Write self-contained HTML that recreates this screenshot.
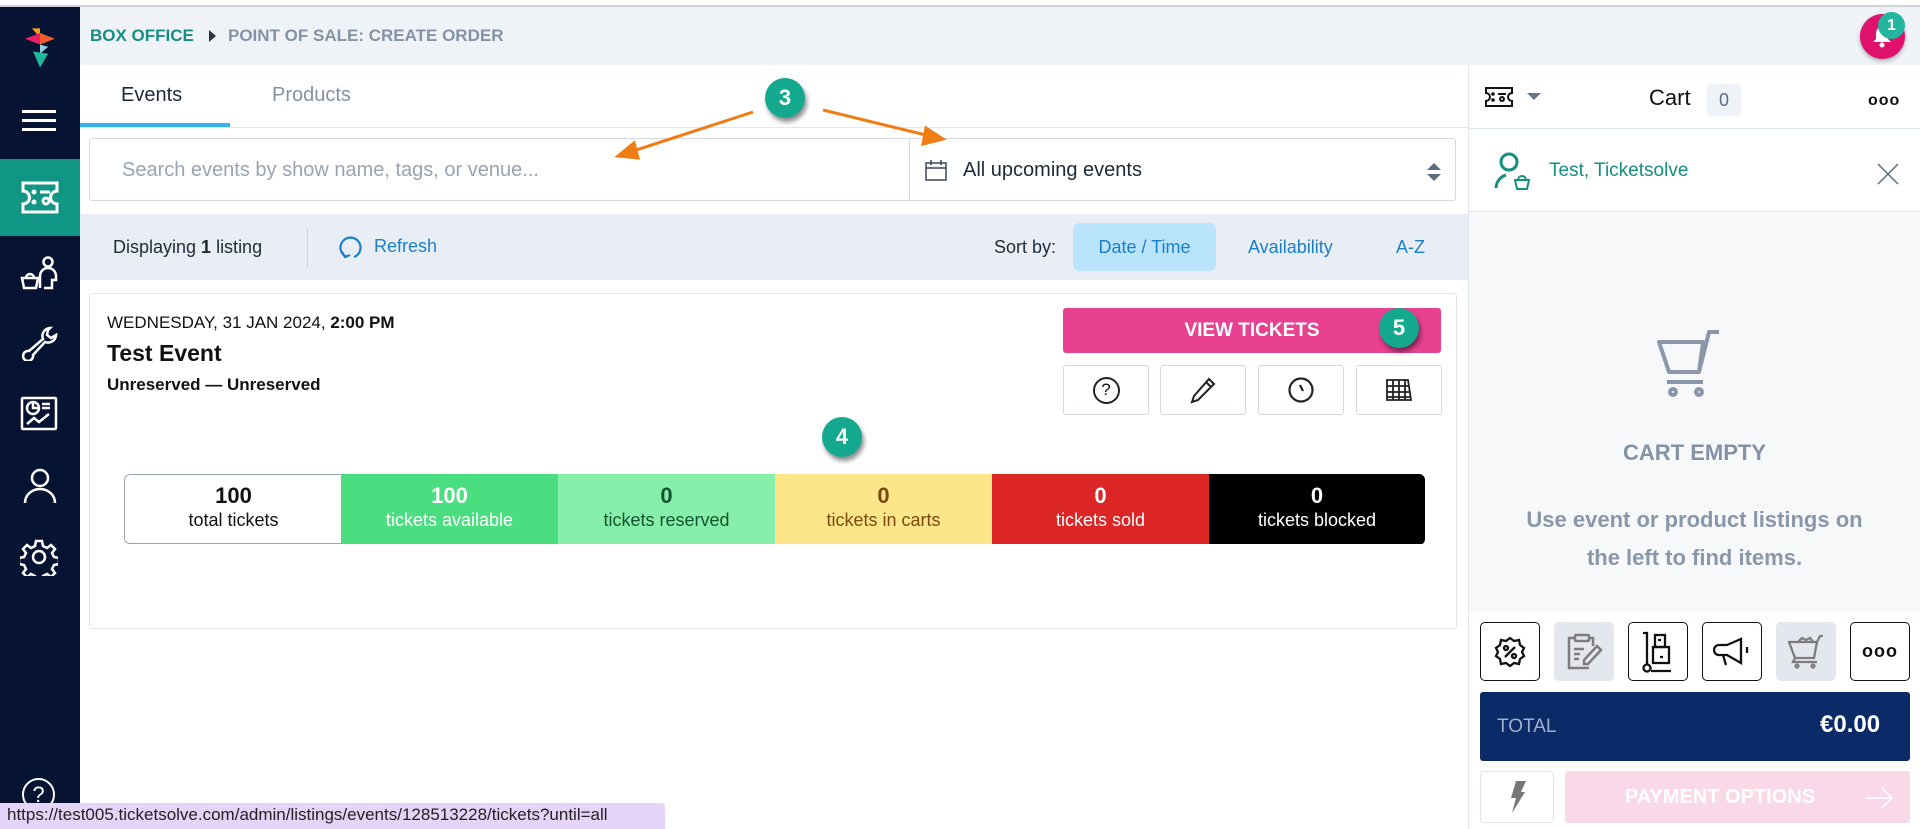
<!DOCTYPE html>
<html><head><meta charset="utf-8"><style>
*{box-sizing:border-box;margin:0;padding:0}
body{width:1920px;height:829px;overflow:hidden;background:#fff;font-family:"Liberation Sans",sans-serif;position:relative;color:#111}
.a{position:absolute}
.c{display:flex;align-items:center;justify-content:center}
svg{display:block}
.badge{position:absolute;width:40px;height:40px;border-radius:50%;background:#14a98f;color:#fff;font-weight:bold;font-size:22px;display:flex;align-items:center;justify-content:center;box-shadow:2px 4px 5px rgba(0,0,0,.45)}
.ib{position:absolute;border:1px solid #d4d8de;border-radius:3px;background:#fff;display:flex;align-items:center;justify-content:center}
.seg{position:absolute;top:0;height:70px;width:217px;text-align:center;padding-top:10px}
.seg b{display:block;font-size:22px;line-height:24px}
.seg span{font-size:18px;line-height:24px}
.rb{position:absolute;top:622px;width:60px;height:59px;border:1.5px solid #111;border-radius:5px;display:flex;align-items:center;justify-content:center;background:#fff}
</style></head><body>
<div class="a" style="left:0;top:0;width:1920px;height:5px;background:#fff"></div>
<div class="a" style="left:0;top:5px;width:1920px;height:2px;background:#cfd2d6"></div>
<!-- sidebar -->
<div class="a" style="left:0;top:7px;width:80px;height:822px;background:#061333"></div>
<svg class="a" style="left:25px;top:28px" width="30" height="40" viewBox="0 0 26 34"><polygon points="6,0 13,0 13,8" fill="#f7a21b"/><polygon points="0,9 13,4 13,14" fill="#e91e63"/><polygon points="13,4 26,9 13,14" fill="#f25c2b"/><polygon points="13,14 20,16 13,22" fill="#8fd0e0"/><polygon points="7,20 20,22 13,34" fill="#1fb89a"/></svg>
<div class="a" style="left:22px;top:110px;width:34px;height:3px;background:#fff"></div>
<div class="a" style="left:22px;top:119px;width:34px;height:3px;background:#fff"></div>
<div class="a" style="left:22px;top:128px;width:34px;height:3px;background:#fff"></div>
<div class="a" style="left:0;top:159px;width:80px;height:77px;background:#119685"></div>
<svg class="a" style="left:20px;top:180px" width="40" height="35" viewBox="0 0 40 35" fill="none" stroke="#fff" stroke-width="3"><path d="M3 3h34v8a6 6 0 0 0 0 13v8H3v-8a6 6 0 0 0 0-13z"/><circle cx="14" cy="12" r="1" fill="#fff"/><circle cx="14" cy="22" r="1" fill="#fff"/><path d="M20 12h10"/><circle cx="26" cy="21" r="3"/></svg>
<svg class="a" style="left:20px;top:256px" width="40" height="36" viewBox="0 0 40 36" fill="none" stroke="#fff" stroke-width="2.5"><circle cx="28" cy="6" r="4.5"/><path d="M20 32V20a8 8 0 0 1 16 0v4h-4v8h-8"/><path d="M2 22h16l-2 10H4z"/><path d="M6 22a4 4 0 0 1 8 0"/></svg>
<svg class="a" style="left:20px;top:325px" width="40" height="36" viewBox="0 0 40 36" fill="none" stroke="#fff" stroke-width="2.5"><path d="M30 3a8 8 0 0 0-7 11L9 26a5 5 0 1 0 4 4l12-13a8 8 0 0 0 11-7l-5 3-4-3 1-5z"/></svg>
<svg class="a" style="left:20px;top:396px" width="38" height="36" viewBox="0 0 38 36" fill="none" stroke="#fff" stroke-width="2.5"><rect x="2" y="2" width="34" height="31" rx="1"/><circle cx="13" cy="12" r="6"/><path d="M13 6v6h6M22 8h8M22 12h8M7 28l7-6 5 4 10-8"/></svg>
<svg class="a" style="left:22px;top:468px" width="36" height="36" viewBox="0 0 36 36" fill="none" stroke="#fff" stroke-width="2.5"><circle cx="18" cy="10" r="8"/><path d="M3 35a15 14 0 0 1 30 0"/></svg>
<svg class="a" style="left:20px;top:538px" width="38" height="38" viewBox="0 0 38 38" fill="none" stroke="#fff" stroke-width="2.5"><circle cx="19" cy="19" r="6"/><path d="M16 3h6l1 5 4 2 4-3 4 4-3 4 2 4 5 1v6l-5 1-2 4 3 4-4 4-4-3-4 2-1 5h-6l-1-5-4-2-4 3-4-4 3-4-2-4-5-1v-6l5-1 2-4-3-4 4-4 4 3 4-2z"/></svg>
<div class="a" style="left:22px;top:778px;width:33px;height:33px;border:2.5px solid #fff;border-radius:50%;color:#fff;font-size:22px;text-align:center;line-height:29px">?</div>
<!-- header -->
<div class="a" style="left:80px;top:7px;width:1840px;height:58px;background:#eff3f8"></div>
<div class="a" style="left:90px;top:26px;font-size:17px;font-weight:bold;color:#148f80">BOX OFFICE</div>
<div class="a" style="left:209px;top:30px;width:0;height:0;border-left:7px solid #2b3340;border-top:6px solid transparent;border-bottom:6px solid transparent"></div>
<div class="a" style="left:228px;top:26px;font-size:17px;font-weight:bold;color:#8592a5">POINT OF SALE: CREATE ORDER</div>
<div class="a" style="left:1860px;top:14px;width:45px;height:45px;border-radius:50%;background:#e0116a;box-shadow:0 2px 4px rgba(0,0,0,.3)"></div>
<svg class="a" style="left:1870px;top:24px" width="24" height="24" viewBox="0 0 24 24"><path d="M12 3a6 6 0 0 0-6 6v6l-3 3h18l-3-3V9a6 6 0 0 0-6-6z" fill="#fff"/><circle cx="12" cy="21" r="2.5" fill="#fff"/></svg>
<div class="a c" style="left:1878px;top:12px;width:27px;height:27px;border-radius:50%;background:#23b59d;color:#fff;font-weight:bold;font-size:16px">1</div>
<!-- tabs -->
<div class="a" style="left:80px;top:127px;width:1389px;height:1px;background:#e1e7ef"></div>
<div class="a" style="left:121px;top:84px;font-size:20px;color:#1e2a3a">Events</div>
<div class="a" style="left:272px;top:84px;font-size:20px;color:#8592a5">Products</div>
<div class="a" style="left:80px;top:123px;width:150px;height:4px;background:#34b4ea"></div>
<!-- search -->
<div class="a" style="left:89px;top:138px;width:1367px;height:63px;border:1px solid #d6dae0;border-radius:3px"></div>
<div class="a" style="left:909px;top:139px;width:1px;height:61px;background:#d6dae0"></div>
<div class="a" style="left:122px;top:159px;font-size:20px;color:#9aa3b2">Search events by show name, tags, or venue...</div>
<svg class="a" style="left:925px;top:160px" width="22" height="21" viewBox="0 0 22 21" fill="none" stroke="#3a4556" stroke-width="1.5"><rect x="1" y="3" width="20" height="17"/><path d="M1 8h20M6 0v5M16 0v5"/></svg>
<div class="a" style="left:963px;top:159px;font-size:20px;color:#1e2a3a">All upcoming events</div>
<div class="a" style="left:1427px;top:163px;border-bottom:7px solid #5d6b80;border-left:7px solid transparent;border-right:7px solid transparent"></div>
<div class="a" style="left:1427px;top:174px;border-top:7px solid #5d6b80;border-left:7px solid transparent;border-right:7px solid transparent"></div>
<!-- toolbar -->
<div class="a" style="left:80px;top:214px;width:1389px;height:66px;background:#e9eef6"></div>
<div class="a" style="left:113px;top:237px;font-size:18px;color:#1e2a3a">Displaying <b>1</b> listing</div>
<div class="a" style="left:307px;top:228px;width:1px;height:40px;background:#cdd3dc"></div>
<svg class="a" style="left:339px;top:235px" width="24" height="25" viewBox="0 0 24 25" fill="none" stroke="#1a7fc8" stroke-width="2.2"><path d="M8 22a10 10 0 1 1 7 0"/><path d="M3 17l3 5 5-2"/></svg>
<div class="a" style="left:374px;top:236px;font-size:18px;color:#1a7fc8">Refresh</div>
<div class="a" style="left:994px;top:237px;font-size:18px;color:#1e2a3a">Sort by:</div>
<div class="a c" style="left:1073px;top:223px;width:143px;height:48px;border-radius:6px;background:#b9e4fb;font-size:18px;color:#1a7fc8">Date / Time</div>
<div class="a" style="left:1248px;top:237px;font-size:18px;color:#1a7fc8">Availability</div>
<div class="a" style="left:1396px;top:237px;font-size:18px;color:#1a7fc8">A-Z</div>
<!-- card -->
<div class="a" style="left:89px;top:293px;width:1368px;height:336px;border:1px solid #e1e5ea;border-radius:3px"></div>
<div class="a" style="left:107px;top:313px;font-size:17px;color:#111">WEDNESDAY, 31 JAN 2024, <b>2:00 PM</b></div>
<div class="a" style="left:107px;top:340px;font-size:23px;font-weight:bold;color:#111">Test Event</div>
<div class="a" style="left:107px;top:375px;font-size:17px;font-weight:bold;color:#111">Unreserved — Unreserved</div>
<div class="a c" style="left:1063px;top:308px;width:378px;height:45px;background:#e8418f;border-radius:3px;color:#fff;font-weight:bold;font-size:19px">VIEW TICKETS</div>
<div class="ib" style="left:1063px;top:365px;width:86px;height:50px"><div class="c" style="width:27px;height:27px;border:2px solid #222;border-radius:50%;font-size:17px">?</div></div>
<div class="ib" style="left:1160px;top:365px;width:86px;height:50px"><svg width="28" height="28" viewBox="0 0 28 28" fill="none" stroke="#222" stroke-width="2"><path d="M20 3l5 5L9 24l-6 2 2-6z M17 6l5 5"/></svg></div>
<div class="ib" style="left:1258px;top:365px;width:86px;height:50px"><svg width="28" height="28" viewBox="0 0 28 28" fill="none" stroke="#222" stroke-width="2.2"><circle cx="14" cy="14" r="11.5"/><path d="M13 9l3 6"/></svg></div>
<div class="ib" style="left:1356px;top:365px;width:86px;height:50px"><svg width="28" height="24" viewBox="0 0 28 24" fill="none" stroke="#222" stroke-width="1.8"><path d="M2 2h21l3 20H2z M2 8h22 M2 14h23 M2 19h24 M8 2v20 M14 2v20 M20 2v20"/></svg></div>
<!-- stats -->
<div class="a" style="left:124px;top:474px;width:1301px;height:71px;border-radius:6px;overflow:hidden">
<div class="seg" style="left:0;width:218px;border:1.5px solid #9aa4b4;border-right:none;border-radius:6px 0 0 6px;background:#fff;color:#111;padding-top:9px"><b>100</b><span>total tickets</span></div>
<div class="seg" style="left:217px;background:#4ade80;color:#fff"><b>100</b><span>tickets available</span></div>
<div class="seg" style="left:434px;background:#86efac;color:#14532d"><b>0</b><span>tickets reserved</span></div>
<div class="seg" style="left:651px;background:#fde68a;color:#7c4a10"><b>0</b><span>tickets in carts</span></div>
<div class="seg" style="left:868px;background:#dc2626;color:#fff"><b>0</b><span>tickets sold</span></div>
<div class="seg" style="left:1085px;width:216px;background:#000;color:#fff"><b>0</b><span>tickets blocked</span></div>
</div>
<!-- annotations -->
<svg class="a" style="left:600px;top:90px" width="360" height="80" viewBox="0 0 360 80"><g stroke="#f07d14" stroke-width="3" fill="#f07d14"><line x1="153" y1="22" x2="30" y2="62"/><polygon points="18,66 34,53 38,68"/><line x1="223" y1="20" x2="330" y2="46"/><polygon points="343,49 326,38 323,54"/></g></svg>
<div class="badge" style="left:765px;top:78px">3</div>
<div class="badge" style="left:822px;top:417px">4</div>
<div class="badge" style="left:1379px;top:308px">5</div>
<!-- right panel -->
<div class="a" style="left:1468px;top:65px;width:1px;height:764px;background:#e1e6ee"></div>
<svg class="a" style="left:1485px;top:87px" width="28" height="20" viewBox="0 0 28 20" fill="none" stroke="#111" stroke-width="2"><path d="M1 1h26v5a4 4 0 0 0 0 8v5H1v-5a4 4 0 0 0 0-8z"/><circle cx="8" cy="7" r=".8" fill="#111"/><circle cx="8" cy="13" r=".8" fill="#111"/><circle cx="17" cy="12" r="2"/><path d="M13 7h8"/></svg>
<div class="a" style="left:1527px;top:93px;border-top:7px solid #6b7689;border-left:7px solid transparent;border-right:7px solid transparent"></div>
<div class="a" style="left:1649px;top:85px;font-size:22px;color:#111">Cart</div>
<div class="a c" style="left:1707px;top:84px;width:34px;height:32px;background:#eef2f7;border-radius:3px;font-size:18px;color:#5d6b80">0</div>
<div class="a" style="left:1868px;top:92px;font-size:16px;font-weight:bold;letter-spacing:1px;color:#111">ooo</div>
<div class="a" style="left:1469px;top:128px;width:451px;height:1px;background:#e1e6ee"></div>
<svg class="a" style="left:1494px;top:151px" width="38" height="40" viewBox="0 0 38 40" fill="none" stroke="#148f80" stroke-width="3"><circle cx="15" cy="11" r="8"/><path d="M2 37a14 14 0 0 1 10-13"/><path d="M21 29h14l-2 9H23z M24 29a4 4 0 0 1 8 0" stroke-width="2"/></svg>
<div class="a" style="left:1549px;top:160px;font-size:19px;color:#148f80">Test, Ticketsolve</div>
<svg class="a" style="left:1877px;top:163px" width="22" height="22" viewBox="0 0 22 22" stroke="#5d6b80" stroke-width="1.5"><path d="M1 1l20 20M21 1L1 21"/></svg>
<div class="a" style="left:1469px;top:211px;width:451px;height:1px;background:#e1e6ee"></div>
<div class="a" style="left:1469px;top:212px;width:451px;height:400px;background:#f7f8fa"></div>
<svg class="a" style="left:1657px;top:328px" width="68" height="72" viewBox="0 0 68 72" fill="none" stroke="#8a97aa" stroke-width="4" stroke-linejoin="round"><path d="M2 14h44l-4 30H12z"/><path d="M42 44l10-40h10"/><path d="M10 54h36"/><circle cx="16" cy="64" r="3"/><circle cx="42" cy="64" r="3"/></svg>
<div class="a" style="left:1469px;top:440px;width:451px;text-align:center;font-size:22px;font-weight:bold;color:#8592a5">CART EMPTY</div>
<div class="a" style="left:1469px;top:501px;width:451px;text-align:center;font-size:22px;line-height:38px;font-weight:bold;color:#8a97aa">Use event or product listings on<br>the left to find items.</div>
<!-- action buttons -->
<div class="rb" style="left:1480px"><svg width="34" height="34" viewBox="0 0 34 34" fill="none" stroke="#111" stroke-width="2.3"><path d="M17 3l4 3 5-1 1 5 4 3-2 4 2 4-4 3-1 5-5-1-4 3-4-3-5 1-1-5-4-3 2-4-2-4 4-3 1-5 5 1z"/><path d="M12 22l10-10"/><circle cx="13" cy="13" r="2"/><circle cx="21" cy="21" r="2"/></svg></div>
<div class="rb" style="left:1554px;border-color:#e4e8ee;background:#e4e8ee"><svg width="38" height="40" viewBox="0 0 38 40" fill="none" stroke="#7d7d7d" stroke-width="2.5"><path d="M10 6H4v30h20 M24 6h4v8"/><rect x="10" y="3" width="14" height="6" rx="1"/><path d="M9 17h10M9 22h6M9 27h5"/><path d="M32 14l4 4-13 14h-4v-4z"/></svg></div>
<div class="rb" style="left:1628px"><svg width="34" height="42" viewBox="0 0 34 42" fill="none" stroke="#111" stroke-width="2.3"><path d="M2 2h4v32 M10 40h20"/><circle cx="6" cy="37" r="3.5"/><rect x="14" y="4" width="10" height="12"/><rect x="12" y="16" width="16" height="16"/><path d="M17 9h3M19 26h3"/></svg></div>
<div class="rb" style="left:1702px"><svg width="38" height="30" viewBox="0 0 38 30" fill="none" stroke="#111" stroke-width="2.3"><path d="M28 2v24L14 18H6a4 4 0 0 1 0-10h8z M10 18l3 10 M34 10v6"/></svg></div>
<div class="rb" style="left:1776px;border-color:#e4e8ee;background:#e4e8ee"><svg width="38" height="36" viewBox="0 0 38 36" fill="none" stroke="#7d7d7d" stroke-width="2.3"><path d="M2 8h28l-3 16H8z M30 8l3-6h3 M8 24l-2 4h24"/><circle cx="10" cy="32" r="1.5"/><circle cx="26" cy="32" r="1.5"/><path d="M11 8l4-4 4 2 4-2 3 4"/></svg></div>
<div class="rb" style="left:1850px;font-weight:bold;font-size:18px;letter-spacing:1px">ooo</div>
<div class="a" style="left:1480px;top:692px;width:430px;height:69px;background:#0a2a68;border-radius:3px"></div>
<div class="a" style="left:1497px;top:716px;font-size:19px;color:#9fb0cc">TOTAL</div>
<div class="a" style="left:1820px;top:711px;font-size:24px;font-weight:bold;color:#fff">€0.00</div>
<div class="a c" style="left:1480px;top:771px;width:74px;height:52px;border:1px solid #e1e5ea;border-radius:3px"><svg width="18" height="32" viewBox="0 0 18 32"><path d="M8 0h10l-5 11h4L4 32l4-15H3z" fill="#777"/></svg></div>
<div class="a" style="left:1565px;top:771px;width:345px;height:52px;background:#f9d9e8;border-radius:3px"></div>
<div class="a" style="left:1625px;top:786px;font-size:20px;font-weight:bold;color:#fff">PAYMENT OPTIONS</div>
<svg class="a" style="left:1866px;top:786px" width="28" height="24" viewBox="0 0 28 24" fill="none" stroke="#fff" stroke-width="1.5"><path d="M0 12h26M16 2l10 10-10 10"/></svg>
<!-- status bar -->
<div class="a" style="left:0;top:803px;width:665px;height:26px;background:#e6d3f8;border-top-right-radius:4px"></div>
<div class="a" style="left:7px;top:805px;font-size:17px;color:#222">https://test005.ticketsolve.com/admin/listings/events/128513228/tickets?until=all</div>
</body></html>
